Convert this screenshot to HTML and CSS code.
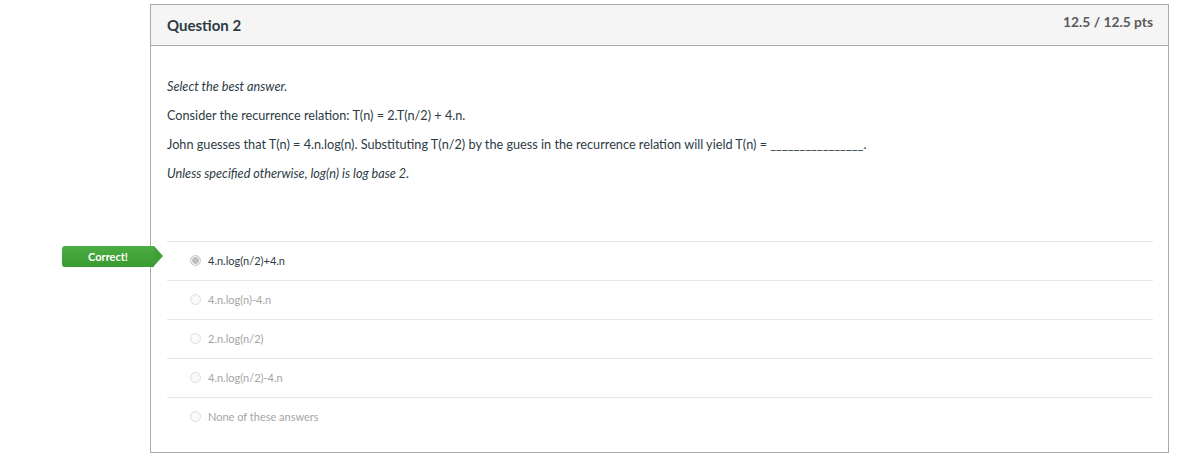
FILE: index.html
```html
<!DOCTYPE html>
<html lang="en">
<head>
    <meta charset="UTF-8">
    <meta name="viewport" content="width=device-width, initial-scale=1.0">
    <title>Question 2</title>
    <link rel="stylesheet" href="styles.css">
</head>
<body>
    <div class="page">
        <div class="question">
            <div class="header">
                <span class="name">Question 2</span>
                <span class="points">12.5 / 12.5 pts</span>
            </div>

            <div class="body">
                <div class="text">
                    <p><em>Select the best answer.</em></p>
                    <p>Consider the recurrence relation: T(n) = 2.T(n/2) + 4.n.</p>
                    <p>John guesses that T(n) = 4.n.log(n). Substituting T(n/2) by the guess in the recurrence relation will yield T(n) = ________________.</p>
                    <p><em>Unless specified otherwise, log(n) is log base 2.</em></p>
                </div>

                <!-- Ответы -->
                <div class="answers">
                    <div class="answer selected">
                        <span class="badge">Correct!</span>
                        <span class="radio"></span>
                        <span class="label">4.n.log(n/2)+4.n</span>
                    </div>
                    <div class="answer">
                        <span class="radio"></span>
                        <span class="label">4.n.log(n)-4.n</span>
                    </div>
                    <div class="answer">
                        <span class="radio"></span>
                        <span class="label">2.n.log(n/2)</span>
                    </div>
                    <div class="answer">
                        <span class="radio"></span>
                        <span class="label">4.n.log(n/2)-4.n</span>
                    </div>
                    <div class="answer">
                        <span class="radio"></span>
                        <span class="label">None of these answers</span>
                    </div>
                </div>
            </div>
        </div>
    </div>
</body>
</html>
```

FILE: styles.css
```css
* {
    box-sizing: border-box;
    margin: 0;
    padding: 0;
}

body {
    font-family: Lato, "Open Sans", sans-serif;
    font-size: 12px;
    color: #2d3b45;
    background: #fff;
}

.page {
    padding: 4px 0 0 150px;
}

.question {
    width: 1019px;
    border: 1px solid #aaa;
    background: #fff;
}

.header {
    display: flex;
    justify-content: space-between;
    align-items: flex-start;
    height: 41px;
    padding: 0 15px 0 16px;
    background: #f5f5f5;
    border-bottom: 1px solid #aaa;
}

.name {
    font-size: 15px;
    font-weight: bold;
    line-height: 18px;
    margin-top: 11px;
}

.points {
    font-size: 13.8px;
    font-weight: bold;
    color: #5a5a5a;
    line-height: 16px;
    margin-top: 9px;
}

.body {
    padding: 32px 15px 16px 16px;
}

.text p {
    font-size: 12.7px;
    line-height: 17px;
    margin-bottom: 12px;
}

.text p:last-child {
    margin-bottom: 0;
}

.answers {
    margin-top: 59px;
}

.answer {
    position: relative;
    display: flex;
    align-items: center;
    height: 39px;
    padding: 0 0 1px 23px;
    border-top: 1px solid #e6e6e6;
    color: #a5a5a5;
    font-size: 11px;
}

.answer.selected {
    color: #2d3b45;
}

.radio {
    width: 11px;
    height: 11px;
    border-radius: 50%;
    border: 1px solid #dcdcdc;
    background: #fafafa;
    margin-right: 7px;
}

.selected .radio {
    border-color: #c8c8c8;
    background: radial-gradient(circle, #bdbdbd 0 3px, #ececec 3.5px);
}

.badge {
    position: absolute;
    left: -105px;
    top: 4px;
    width: 92px;
    height: 21px;
    line-height: 21px;
    text-align: center;
    font-size: 11px;
    font-weight: bold;
    color: #fff;
    background: linear-gradient(#4cae42, #389a30);
    border-radius: 3px 0 0 3px;
}

.badge::after {
    content: "";
    position: absolute;
    right: -9px;
    top: 0;
    border-left: 9px solid #409f36;
    border-top: 10.5px solid transparent;
    border-bottom: 10.5px solid transparent;
}
```
